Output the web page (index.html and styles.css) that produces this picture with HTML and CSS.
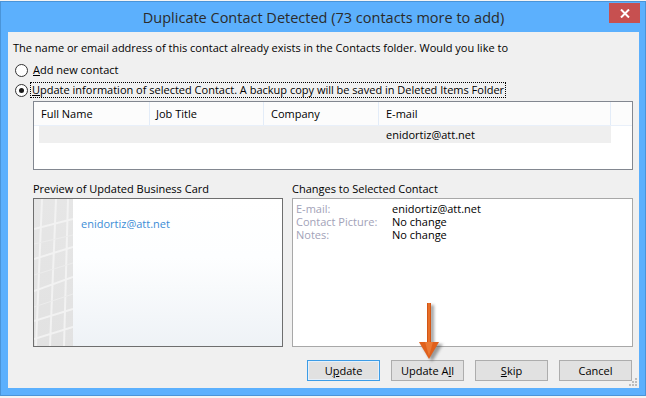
FILE: index.html
```html
<!DOCTYPE html>
<html lang="en">
<head>
<meta charset="utf-8">
<title>Duplicate Contact Detected</title>
<link rel="stylesheet" href="styles.css">
</head>
<body>
<div class="window">
  <div class="titlebar">
    <span class="title">Duplicate Contact Detected (73 contacts more to add)</span>
    <div class="close">
      <svg width="10" height="9" viewBox="0 0 10 9"><path d="M1 0.5 L9 8.5 M9 0.5 L1 8.5" stroke="#fff" stroke-width="2"/></svg>
    </div>
  </div>
  <div class="content">
    <p class="intro">The name or email address of this contact already exists in the Contacts folder. Would you like to</p>
    <div class="radio-row">
      <span class="radio"></span>
      <span class="radio-text"><u>A</u>dd new contact</span>
    </div>
    <div class="radio-row">
      <span class="radio checked"></span>
      <span class="radio-text focus"><u>U</u>pdate information of selected Contact. A backup copy will be saved in Deleted Items Folder</span>
    </div>
    <div class="list">
      <div class="list-head">
        <div class="col c1">Full Name</div>
        <div class="col c2">Job Title</div>
        <div class="col c3">Company</div>
        <div class="col c4">E-mail</div>
        <div class="col c5"></div>
      </div>
      <div class="list-row">
        <div class="cell r1"></div>
        <div class="cell c2"></div>
        <div class="cell c3"></div>
        <div class="cell c4">enidortiz@att.net</div>
      </div>
    </div>
    <div class="panes">
      <div class="pane pane-card">
        <div class="pane-label">Preview of Updated Business Card</div>
        <div class="card">
          <div class="card-stripe">
            <svg width="39" height="147" viewBox="0 0 39 147">
              <path d="M0 30 L39 20 M0 60 L39 48 M0 92 L39 78 M0 122 L39 110 M8 0 L2 147 M22 0 L16 147 M34 0 L30 147 M0 140 L39 128" stroke="#f2f2f2" stroke-width="2" fill="none"/>
              <path d="M0 45 L39 36 M0 76 L39 64 M0 108 L39 95" stroke="#ececec" stroke-width="1" fill="none"/>
            </svg>
          </div>
          <div class="card-body">
            <div class="card-email">enidortiz@att.net</div>
          </div>
        </div>
      </div>
      <div class="pane pane-changes">
        <div class="pane-label">Changes to Selected Contact</div>
        <div class="changes">
          <div class="ch-label">E-mail:</div><div class="ch-value">enidortiz@att.net</div>
          <div class="ch-label">Contact Picture:</div><div class="ch-value">No change</div>
          <div class="ch-label">Notes:</div><div class="ch-value">No change</div>
        </div>
      </div>
    </div>
    <div class="buttons">
      <button class="btn default">U<u>p</u>date</button>
      <button class="btn">Update A<u>l</u>l</button>
      <button class="btn"><u>S</u>kip</button>
      <button class="btn">Cancel</button>
    </div>
    <svg class="grip" width="9" height="9" viewBox="0 0 9 9">
      <rect x="6" y="0" width="2" height="2" fill="#bcbcbc"/>
      <rect x="3" y="3" width="2" height="2" fill="#bcbcbc"/>
      <rect x="6" y="3" width="2" height="2" fill="#bcbcbc"/>
      <rect x="0" y="6" width="2" height="2" fill="#bcbcbc"/>
      <rect x="3" y="6" width="2" height="2" fill="#bcbcbc"/>
      <rect x="6" y="6" width="2" height="2" fill="#bcbcbc"/>
    </svg>
  </div>
  <svg class="arrow" width="40" height="66" viewBox="0 0 40 66">
    <defs>
      <linearGradient id="shaft" x1="0" y1="0" x2="1" y2="0">
        <stop offset="0" stop-color="#c84a0c"/>
        <stop offset="0.5" stop-color="#f27a30"/>
        <stop offset="1" stop-color="#c84a0c"/>
      </linearGradient>
      <filter id="sh" x="-50%" y="-20%" width="200%" height="150%">
        <feGaussianBlur stdDeviation="1.6"/>
      </filter>
    </defs>
    <g filter="url(#sh)" fill="#555" opacity="0.55">
      <rect x="17" y="7" width="4" height="48"/>
      <path d="M8 46 L30 46 L19 64 Z"/>
    </g>
    <rect x="14" y="5" width="4" height="46" fill="url(#shaft)"/>
    <path d="M6 44 L26 44 L16 61 Z" fill="#e0601c"/>
    <path d="M12 44 L20 44 L16 58 Z" fill="#f28a44" opacity="0.6"/>
  </svg>
</div>
</body>
</html>
```

FILE: styles.css
```css
* { box-sizing: border-box; }

html, body {
  margin: 0;
  padding: 0;
}

body {
  width: 646px;
  height: 398px;
  background: #f4f4f4;
  font-family: "Open Sans", "Noto Sans", sans-serif;
  font-size: 11px;
  color: #000;
  overflow: hidden;
}

.window {
  position: relative;
  margin-top: 1px;
  width: 646px;
  height: 395px;
  background: #5cb0fd;
  border: 1px solid #4a94d8;
  padding: 0 6px 7px 7px;
  display: flex;
  flex-direction: column;
}

.titlebar {
  position: relative;
  height: 30px;
  flex: none;
  display: flex;
  align-items: center;
  justify-content: center;
}

.title {
  font-size: 14.5px;
  color: #2b2b2b;
  line-height: 18px;
  margin-top: 1px;
}

.close {
  position: absolute;
  top: 1px;
  right: -1px;
  width: 31px;
  height: 20px;
  background: #c75050;
  display: flex;
  align-items: center;
  justify-content: center;
}

.content {
  position: relative;
  flex: 1;
  background: #f0f0f0;
  display: flex;
  flex-direction: column;
}

.intro {
  margin: 8px 0 0 5px;
  line-height: 16px;
  white-space: nowrap;
}

.radio-row {
  display: flex;
  align-items: center;
  height: 16px;
  margin-left: 7px;
  margin-top: 6px;
}

.radio-row + .radio-row {
  margin-top: 4px;
}

.radio {
  width: 13px;
  height: 13px;
  border-radius: 50%;
  border: 1px solid #333;
  background: #fff;
  flex: none;
  position: relative;
}

.radio.checked::after {
  content: "";
  position: absolute;
  left: 3px;
  top: 3px;
  width: 5px;
  height: 5px;
  border-radius: 50%;
  background: #1a1a1a;
}

.radio-text {
  margin-left: 3px;
  line-height: 14px;
  white-space: nowrap;
  padding: 0 1px;
  border: 1px solid transparent;
}

.radio-text.focus {
  border: 1px dotted #000;
  margin-left: 2px;
}

.list {
  margin: 3px 0 0 25px;
  width: 600px;
  height: 69px;
  border: 1px solid #828790;
  background: #fff;
}

.list-head {
  display: flex;
  height: 24px;
  background: #fcfcfc;
  border-bottom: 1px solid #e9f0fa;
}

.col {
  line-height: 23px;
  padding-left: 7px;
  border-right: 1px solid #e3ecf8;
  white-space: nowrap;
}

.c1 { width: 116px; }
.c2 { width: 114px; padding-left: 6px; }
.c3 { width: 115px; }
.c4 { width: 232px; }
.c5 { flex: 1; border-right: none; }

.list-row {
  display: flex;
  height: 17px;
  margin-left: 5px;
  width: 572px;
  background: #efefef;
}

.cell {
  line-height: 17px;
  padding-left: 7px;
  white-space: nowrap;
}

.r1 { width: 111px; }
.list-row .c4 { width: 232px; }

.panes {
  display: flex;
  margin: 11px 0 0 25px;
  gap: 9px;
}

.pane-label {
  line-height: 16px;
  height: 16px;
  margin-bottom: 1px;
  white-space: nowrap;
}

.card {
  width: 250px;
  height: 149px;
  border: 1px solid #6e6e6e;
  display: flex;
}

.card-stripe {
  width: 39px;
  background: linear-gradient(180deg, #e6e6e6, #e2e2e2);
  overflow: hidden;
}

.card-stripe svg { display: block; }

.card-body {
  flex: 1;
  background: linear-gradient(180deg, #ffffff 0%, #fdfeff 40%, #eef2f6 100%);
  padding: 17px 0 0 8px;
}

.card-email {
  color: #3c8cd6;
  line-height: 16px;
}

.changes {
  width: 341px;
  height: 149px;
  border: 1px solid #a8a8a8;
  background: #fff;
  padding: 3px 0 0 3px;
  display: grid;
  grid-template-columns: 96px 1fr;
  grid-auto-rows: 13px;
  align-content: start;
  line-height: 13px;
}

.ch-label { color: #a2a2b8; white-space: nowrap; }
.ch-value { color: #000; white-space: nowrap; }

.buttons {
  display: flex;
  gap: 11px;
  margin: 13px 0 0 299px;
}

.btn {
  width: 73px;
  height: 21px;
  padding: 0;
  font-family: inherit;
  font-size: 11px;
  color: #000;
  background: #e1e1e1;
  border: 1px solid #adadad;
  border-radius: 0;
  line-height: 18px;
}

.btn.default {
  border-color: #3c9ce6;
  box-shadow: inset 0 0 0 1px #e6f0fa;
}

.grip {
  position: absolute;
  right: 1px;
  bottom: 1px;
}

.arrow {
  position: absolute;
  left: 412px;
  top: 296px;
}
```
